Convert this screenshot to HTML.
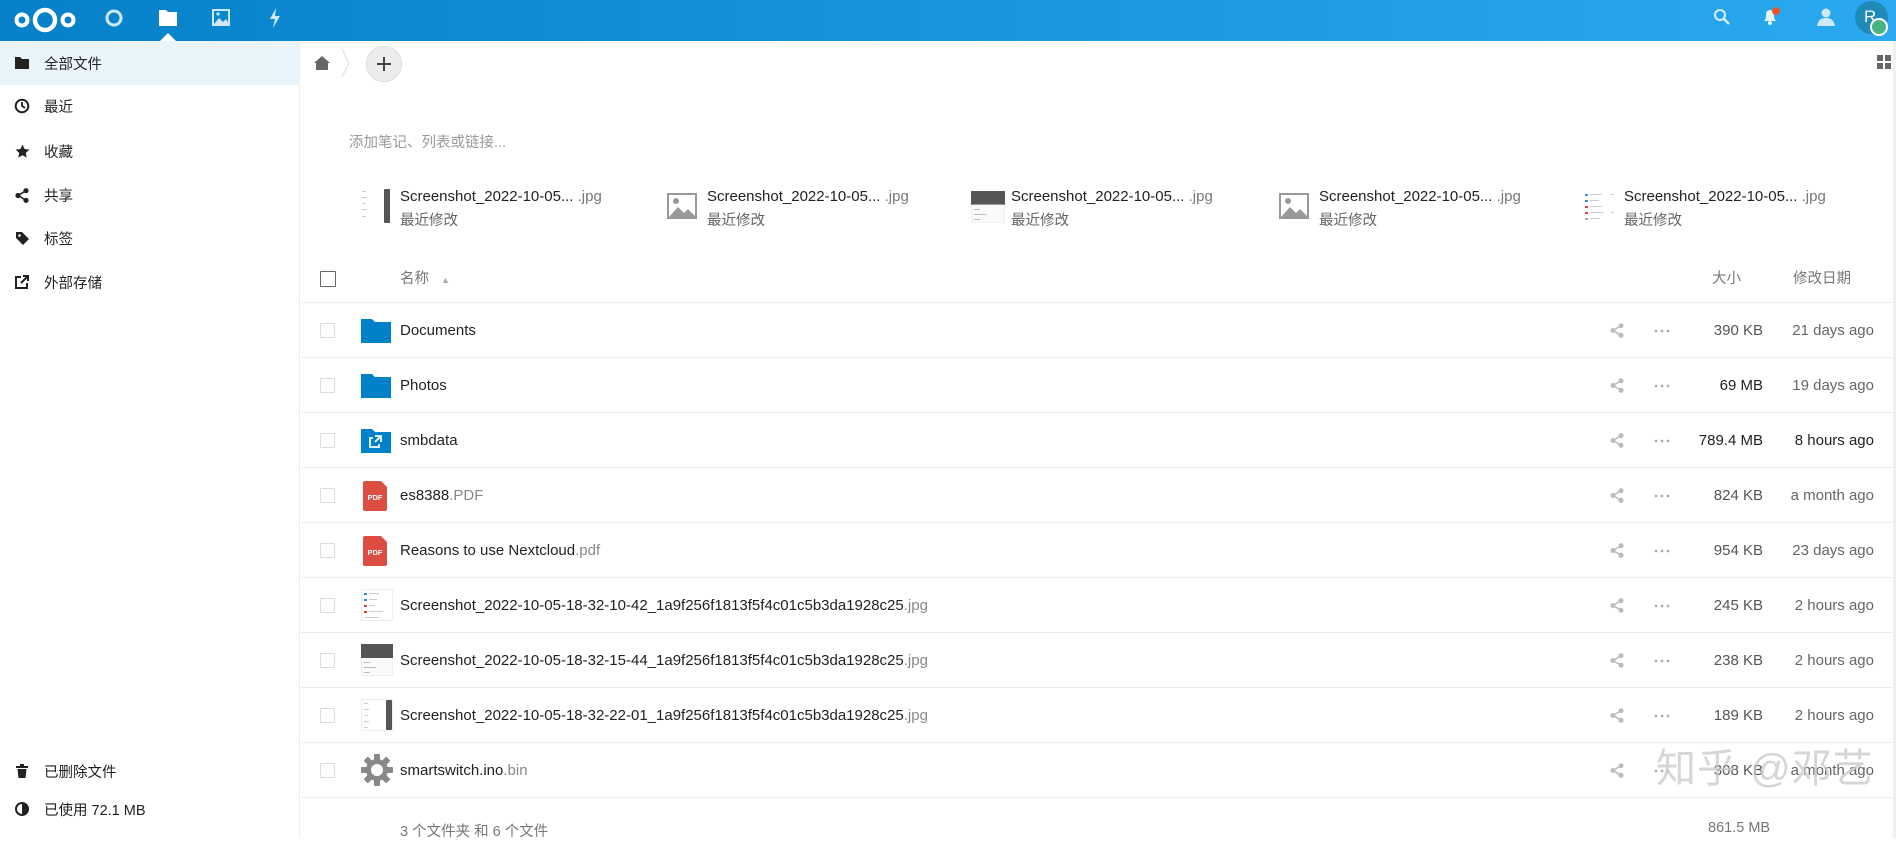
<!DOCTYPE html>
<html><head><meta charset="utf-8"><style>
*{box-sizing:border-box;margin:0;padding:0}
body{width:1896px;height:838px;overflow:hidden;background:#fff;font-family:"Liberation Sans","Noto Sans CJK SC",sans-serif;color:#222;font-size:15px;position:relative}
.hdr{position:absolute;left:0;top:0;width:1896px;height:41px;background:linear-gradient(90deg,#0681c9,#2aa9f0)}
.abs{position:absolute}
.side{position:absolute;left:0;top:41px;width:300px;height:797px;border-right:1px solid #eee}
.nav{position:absolute;left:0;width:299px;height:44px;display:flex;align-items:center;font-size:14.5px;color:#222}
.nav .ic{width:44px;display:flex;justify-content:center;padding-left:0}
.row{position:absolute;left:301px;width:1595px;height:55px;border-bottom:1px solid #ededed}
.cb{position:absolute;left:19px;top:20px;width:15px;height:15px;border:1px solid #ddd;border-radius:1px}
.nm{position:absolute;left:99px;top:0;line-height:55px;color:#222}
.nm i{font-style:normal;color:#888}
.sh{position:absolute;left:1309px;top:20px}
.dt{position:absolute;left:1352px;top:26px;width:18px;height:4px;background:radial-gradient(circle,#aaa 1.2px,transparent 1.5px) 0 0/6px 4px}
.sz{position:absolute;right:133px;line-height:55px;color:#555;text-align:right}
.dd{position:absolute;right:22px;line-height:55px;color:#666;text-align:right}
.fi{position:absolute;left:60px;top:15px}
.rec{position:absolute;top:185px;height:40px}
.rec .t{position:absolute;left:40px;top:3px;white-space:nowrap;font-size:15px;color:#222}
.rec .t i{font-style:normal;color:#777}
.rec .s{position:absolute;left:40px;top:24px;white-space:nowrap;font-size:14.5px;color:#666}
</style></head><body>
<div class="hdr">
<svg class="abs" style="left:13px;top:5px" width="64" height="30" viewBox="0 0 64 30"><circle cx="32" cy="15" r="10" fill="none" stroke="#fff" stroke-width="4.5"/><circle cx="9" cy="15" r="5.5" fill="none" stroke="#fff" stroke-width="4"/><circle cx="55" cy="15" r="5.5" fill="none" stroke="#fff" stroke-width="4"/></svg>
<svg class="abs" style="left:104px;top:8px" width="20" height="20"><circle cx="10" cy="10" r="7" fill="none" stroke="#cfe8f7" stroke-width="3"/></svg>
<svg class="abs" style="left:158px;top:9px" width="20" height="18"><path d="M1 1h7l2 2h9v14H1z" fill="#fff"/></svg>
<svg class="abs" style="left:160px;top:33px" width="16" height="8"><path d="M0 8L8 0l8 8z" fill="#fff"/></svg>
<svg class="abs" style="left:212px;top:9px" width="18" height="17"><rect x="1" y="1" width="16" height="15" fill="none" stroke="#cfe8f7" stroke-width="2"/><path d="M2 15l5-6 4 4 3-3 3 5z" fill="#cfe8f7"/><circle cx="6" cy="5" r="1.6" fill="#cfe8f7"/></svg>
<svg class="abs" style="left:268px;top:8px" width="14" height="20"><path d="M8 0L2 11h5l-2 9 7-12H7z" fill="#cfe8f7"/></svg>
<svg class="abs" style="left:1713px;top:8px" width="18" height="18"><circle cx="7" cy="7" r="5" fill="none" stroke="#d6eefc" stroke-width="2"/><path d="M11 11l5 5" stroke="#d6eefc" stroke-width="2.5"/></svg>
<svg class="abs" style="left:1760px;top:6px" width="22" height="20"><path d="M4 15c2-2 2-4 2-7a4 4 0 0 1 8 0c0 3 0 5 2 7z" fill="#e6f5fd"/><circle cx="10" cy="17" r="2" fill="#e6f5fd"/><circle cx="16" cy="5" r="4" fill="#e9542f"/></svg>
<svg class="abs" style="left:1815px;top:7px" width="20" height="20"><circle cx="11" cy="6" r="4.5" fill="#cfe8f7"/><path d="M2 19c1-6 4-8 9-8s8 2 9 8z" fill="#cfe8f7"/></svg>
<div class="abs" style="left:1855px;top:1px;width:33px;height:33px;border-radius:50%;background:#1f8ab7;color:#fff;font-size:17px;line-height:31px;padding-left:9px">R</div>
<div class="abs" style="left:1870px;top:18px;width:18px;height:18px;border-radius:50%;background:#49b382;border:2px solid #fff"></div>
</div>

<div class="side">
<div class="nav" style="top:0;background:#eaf4fb"><div class="ic"><svg width="14" height="12"><path d="M0 0h5l2 2h7v10H0z" fill="#222"/></svg></div><span>全部文件</span></div>
<div class="nav" style="top:43px"><div class="ic"><svg width="16" height="16"><circle cx="8" cy="8" r="6.3" fill="none" stroke="#222" stroke-width="2"/><path d="M8 4v4l3 2" stroke="#222" stroke-width="1.8" fill="none"/></svg></div><span>最近</span></div>
<div class="nav" style="top:88px"><div class="ic"><svg width="15" height="15" viewBox="0 0 24 24"><path d="M12 1l3.3 7 7.7.9-5.7 5.3 1.5 7.6L12 18l-6.8 3.8 1.5-7.6L1 8.9 8.7 8z" fill="#222"/></svg></div><span>收藏</span></div>
<div class="nav" style="top:132px"><div class="ic"><svg width="14" height="15"><circle cx="3" cy="7.5" r="2.6" fill="#222"/><circle cx="11" cy="2.7" r="2.6" fill="#222"/><circle cx="11" cy="12.3" r="2.6" fill="#222"/><path d="M3 7.5L11 2.7M3 7.5l8 4.8" stroke="#222" stroke-width="1.6"/></svg></div><span>共享</span></div>
<div class="nav" style="top:175px"><div class="ic"><svg width="15" height="15"><path d="M1 1h6l7 7-6 6-7-7z" fill="#222"/><circle cx="4.5" cy="4.5" r="1.3" fill="#fff"/></svg></div><span>标签</span></div>
<div class="nav" style="top:219px"><div class="ic"><svg width="14" height="14"><path d="M6 2H1v11h11V8" fill="none" stroke="#222" stroke-width="2"/><path d="M8 1h5v5M13 1L6 8" stroke="#222" stroke-width="2" fill="none"/></svg></div><span>外部存储</span></div>
<div class="nav" style="top:708px"><div class="ic"><svg width="12" height="14"><path d="M0 2h12v2H0zM4 0h4v2H4zM1.5 5h9l-1 9h-7z" fill="#222"/></svg></div><span>已删除文件</span></div>
<div class="nav" style="top:746px"><div class="ic"><svg width="14" height="14"><circle cx="7" cy="7" r="6" fill="none" stroke="#222" stroke-width="2"/><path d="M7 1a6 6 0 0 1 0 12z" fill="#222"/></svg></div><span>已使用 72.1 MB</span></div>
</div>

<svg class="abs" style="left:314px;top:56px" width="16" height="14"><path d="M8 0l8 7h-2v7H2V7H0z" fill="#666"/></svg>
<svg class="abs" style="left:341px;top:48px" width="10" height="30"><path d="M1 1l7 14-7 14" stroke="#ddd" fill="none"/></svg>
<div class="abs" style="left:366px;top:46px;width:36px;height:36px;border-radius:50%;background:#ececec;border:1px solid #ddd"></div>
<div class="abs" style="left:377px;top:63px;width:14px;height:2px;background:#444"></div>
<div class="abs" style="left:383px;top:57px;width:2px;height:14px;background:#444"></div>
<svg class="abs" style="left:1877px;top:55px" width="14" height="14"><rect width="6" height="6" fill="#666"/><rect x="8" width="6" height="6" fill="#666"/><rect y="8" width="6" height="6" fill="#666"/><rect x="8" y="8" width="6" height="6" fill="#666"/></svg>

<div class="abs" style="left:349px;top:131px;color:#999;font-size:14.5px">添加笔记、列表或链接...</div>

<div class="rec" style="left:360px"><svg class="abs" style="left:0;top:4px" width="34" height="38"><g fill="#ccc"><rect x="2" y="2" width="4" height="1"/><rect x="2" y="8" width="5" height="1"/><rect x="2" y="14" width="4" height="1"/><rect x="2" y="20" width="5" height="1"/><rect x="2" y="27" width="4" height="1"/></g><rect x="24" y="0" width="6" height="34" rx="1" fill="#555"/></svg><div class="t">Screenshot_2022-10-05...<i> .jpg</i></div><div class="s">最近修改</div></div>
<div class="rec" style="left:667px"><svg class="abs" style="left:0;top:8px" width="30" height="26"><rect x="1" y="1" width="28" height="24" fill="none" stroke="#999" stroke-width="2"/><path d="M2 24l9-10 6 6 4-4 8 8z" fill="#999"/><circle cx="9" cy="8" r="3" fill="#999"/></svg><div class="t">Screenshot_2022-10-05...<i> .jpg</i></div><div class="s">最近修改</div></div>
<div class="rec" style="left:971px"><svg class="abs" style="left:0;top:6px" width="34" height="32"><rect width="34" height="14" fill="#555"/><rect x="1" y="14" width="32" height="18" fill="#fafafa" stroke="#eee"/><g fill="#bbb"><rect x="3" y="18" width="6" height="1"/><rect x="3" y="23" width="12" height="1"/><rect x="3" y="28" width="6" height="1"/></g></svg><div class="t">Screenshot_2022-10-05...<i> .jpg</i></div><div class="s">最近修改</div></div>
<div class="rec" style="left:1279px"><svg class="abs" style="left:0;top:8px" width="30" height="26"><rect x="1" y="1" width="28" height="24" fill="none" stroke="#999" stroke-width="2"/><path d="M2 24l9-10 6 6 4-4 8 8z" fill="#999"/><circle cx="9" cy="8" r="3" fill="#999"/></svg><div class="t">Screenshot_2022-10-05...<i> .jpg</i></div><div class="s">最近修改</div></div>
<div class="rec" style="left:1584px"><svg class="abs" style="left:0;top:6px" width="34" height="32"><g><rect x="1" y="3" width="3" height="2" fill="#3b8fd4"/><rect x="1" y="9" width="3" height="2" fill="#3b8fd4"/><rect x="1" y="15" width="3" height="2" fill="#d44"/><rect x="1" y="21" width="3" height="2" fill="#d44"/><rect x="1" y="27" width="3" height="2" fill="#aaa"/></g><g fill="#ccc"><rect x="6" y="3" width="12" height="1"/><rect x="6" y="9" width="9" height="1"/><rect x="6" y="15" width="12" height="1"/><rect x="6" y="21" width="14" height="1"/><rect x="6" y="27" width="10" height="1"/><rect x="27" y="3" width="3" height="1"/><rect x="27" y="21" width="3" height="1"/></g></svg><div class="t">Screenshot_2022-10-05...<i> .jpg</i></div><div class="s">最近修改</div></div>

<div class="row" style="top:247px;height:56px">
<div class="cb" style="top:24px;border-color:#666;width:16px;height:16px"></div>
<div class="nm" style="line-height:64px;color:#777;font-size:14.5px">名称 <span style="font-size:9px;color:#aaa;margin-left:8px">▲</span></div>
<div class="abs" style="left:1411px;line-height:64px;color:#777;font-size:14.5px">大小</div>
<div class="abs" style="left:1492px;line-height:64px;color:#777;font-size:14.5px">修改日期</div>
</div>

<div class="row" style="top:303px"><div class="cb"></div><svg class="fi" width="30" height="24" style="top:16px"><path d="M0 0h11l3 3h16v21H0z" fill="#0082c9"/></svg><div class="nm">Documents</div><svg class="sh" width="14" height="15"><circle cx="3" cy="7.5" r="2.5" fill="#bbb"/><circle cx="11" cy="2.7" r="2.5" fill="#bbb"/><circle cx="11" cy="12.3" r="2.5" fill="#bbb"/><path d="M3 7.5L11 2.7M3 7.5l8 4.8" stroke="#bbb" stroke-width="1.5"/></svg><div class="dt"></div><div class="sz">390 KB</div><div class="dd">21 days ago</div></div>
<div class="row" style="top:358px"><div class="cb"></div><svg class="fi" width="30" height="24" style="top:16px"><path d="M0 0h11l3 3h16v21H0z" fill="#0082c9"/></svg><div class="nm">Photos</div><svg class="sh" width="14" height="15"><circle cx="3" cy="7.5" r="2.5" fill="#bbb"/><circle cx="11" cy="2.7" r="2.5" fill="#bbb"/><circle cx="11" cy="12.3" r="2.5" fill="#bbb"/><path d="M3 7.5L11 2.7M3 7.5l8 4.8" stroke="#bbb" stroke-width="1.5"/></svg><div class="dt"></div><div class="sz" style="color:#222">69 MB</div><div class="dd">19 days ago</div></div>
<div class="row" style="top:413px"><div class="cb"></div><svg class="fi" width="30" height="24" style="top:16px"><path d="M0 0h11l3 3h16v21H0z" fill="#0082c9"/><path d="M12 9h-3v9h9v-3" stroke="#fff" stroke-width="1.8" fill="none"/><path d="M14 7h6v6M20 7l-6 6" stroke="#fff" stroke-width="1.8" fill="none"/></svg><div class="nm">smbdata</div><svg class="sh" width="14" height="15"><circle cx="3" cy="7.5" r="2.5" fill="#bbb"/><circle cx="11" cy="2.7" r="2.5" fill="#bbb"/><circle cx="11" cy="12.3" r="2.5" fill="#bbb"/><path d="M3 7.5L11 2.7M3 7.5l8 4.8" stroke="#bbb" stroke-width="1.5"/></svg><div class="dt"></div><div class="sz" style="color:#222">789.4 MB</div><div class="dd" style="color:#222">8 hours ago</div></div>
<div class="row" style="top:468px"><div class="cb"></div><svg class="fi" width="26" height="30" style="left:62px;top:13px"><path d="M0 2a2 2 0 0 1 2-2h16l6 6v22a2 2 0 0 1-2 2H2a2 2 0 0 1-2-2z" fill="#dc4e41"/><text x="12" y="19" font-size="7.5" fill="#fff" text-anchor="middle" font-family="Liberation Sans" font-weight="bold">PDF</text></svg><div class="nm">es8388<i>.PDF</i></div><svg class="sh" width="14" height="15"><circle cx="3" cy="7.5" r="2.5" fill="#bbb"/><circle cx="11" cy="2.7" r="2.5" fill="#bbb"/><circle cx="11" cy="12.3" r="2.5" fill="#bbb"/><path d="M3 7.5L11 2.7M3 7.5l8 4.8" stroke="#bbb" stroke-width="1.5"/></svg><div class="dt"></div><div class="sz">824 KB</div><div class="dd">a month ago</div></div>
<div class="row" style="top:523px"><div class="cb"></div><svg class="fi" width="26" height="30" style="left:62px;top:13px"><path d="M0 2a2 2 0 0 1 2-2h16l6 6v22a2 2 0 0 1-2 2H2a2 2 0 0 1-2-2z" fill="#dc4e41"/><text x="12" y="19" font-size="7.5" fill="#fff" text-anchor="middle" font-family="Liberation Sans" font-weight="bold">PDF</text></svg><div class="nm">Reasons to use Nextcloud<i>.pdf</i></div><svg class="sh" width="14" height="15"><circle cx="3" cy="7.5" r="2.5" fill="#bbb"/><circle cx="11" cy="2.7" r="2.5" fill="#bbb"/><circle cx="11" cy="12.3" r="2.5" fill="#bbb"/><path d="M3 7.5L11 2.7M3 7.5l8 4.8" stroke="#bbb" stroke-width="1.5"/></svg><div class="dt"></div><div class="sz">954 KB</div><div class="dd">23 days ago</div></div>
<div class="row" style="top:578px"><div class="cb"></div><svg class="fi" width="32" height="32" style="top:11px"><rect x=".5" y=".5" width="31" height="31" fill="#fff" stroke="#eee"/><rect x="3" y="4" width="3" height="2" fill="#3b8fd4"/><rect x="3" y="10" width="3" height="2" fill="#3b8fd4"/><rect x="3" y="16" width="3" height="2" fill="#d44"/><rect x="3" y="22" width="3" height="2" fill="#d44"/><g fill="#ccc"><rect x="8" y="4" width="10" height="1"/><rect x="8" y="10" width="8" height="1"/><rect x="8" y="16" width="6" height="1"/><rect x="8" y="22" width="14" height="1"/><rect x="4" y="28" width="14" height="1"/></g></svg><div class="nm">Screenshot_2022-10-05-18-32-10-42_1a9f256f1813f5f4c01c5b3da1928c25<i>.jpg</i></div><svg class="sh" width="14" height="15"><circle cx="3" cy="7.5" r="2.5" fill="#bbb"/><circle cx="11" cy="2.7" r="2.5" fill="#bbb"/><circle cx="11" cy="12.3" r="2.5" fill="#bbb"/><path d="M3 7.5L11 2.7M3 7.5l8 4.8" stroke="#bbb" stroke-width="1.5"/></svg><div class="dt"></div><div class="sz">245 KB</div><div class="dd">2 hours ago</div></div>
<div class="row" style="top:633px"><div class="cb"></div><svg class="fi" width="32" height="32" style="top:11px"><rect x=".5" y=".5" width="31" height="31" fill="#fafafa" stroke="#eee"/><rect width="32" height="14" fill="#555"/><g fill="#bbb"><rect x="3" y="18" width="6" height="1"/><rect x="3" y="23" width="12" height="1"/><rect x="3" y="28" width="6" height="1"/></g></svg><div class="nm">Screenshot_2022-10-05-18-32-15-44_1a9f256f1813f5f4c01c5b3da1928c25<i>.jpg</i></div><svg class="sh" width="14" height="15"><circle cx="3" cy="7.5" r="2.5" fill="#bbb"/><circle cx="11" cy="2.7" r="2.5" fill="#bbb"/><circle cx="11" cy="12.3" r="2.5" fill="#bbb"/><path d="M3 7.5L11 2.7M3 7.5l8 4.8" stroke="#bbb" stroke-width="1.5"/></svg><div class="dt"></div><div class="sz">238 KB</div><div class="dd">2 hours ago</div></div>
<div class="row" style="top:688px"><div class="cb"></div><svg class="fi" width="32" height="32" style="top:11px"><rect x=".5" y=".5" width="31" height="31" fill="#fff" stroke="#eee"/><g fill="#ccc"><rect x="3" y="4" width="4" height="1"/><rect x="3" y="10" width="5" height="1"/><rect x="3" y="16" width="4" height="1"/><rect x="3" y="22" width="5" height="1"/><rect x="3" y="28" width="4" height="1"/></g><rect x="25" y="1" width="6" height="30" rx="1" fill="#555"/></svg><div class="nm">Screenshot_2022-10-05-18-32-22-01_1a9f256f1813f5f4c01c5b3da1928c25<i>.jpg</i></div><svg class="sh" width="14" height="15"><circle cx="3" cy="7.5" r="2.5" fill="#bbb"/><circle cx="11" cy="2.7" r="2.5" fill="#bbb"/><circle cx="11" cy="12.3" r="2.5" fill="#bbb"/><path d="M3 7.5L11 2.7M3 7.5l8 4.8" stroke="#bbb" stroke-width="1.5"/></svg><div class="dt"></div><div class="sz">189 KB</div><div class="dd">2 hours ago</div></div>
<div class="row" style="top:743px"><div class="cb"></div><svg class="fi" width="32" height="32" style="top:11px" viewBox="0 0 32 32"><g fill="#888"><circle cx="16" cy="16" r="11"/><rect x="13" y="0" width="6" height="32" rx="1"/><rect x="0" y="13" width="32" height="6" rx="1"/><rect x="13" y="0" width="6" height="32" rx="1" transform="rotate(45 16 16)"/><rect x="13" y="0" width="6" height="32" rx="1" transform="rotate(-45 16 16)"/></g><circle cx="16" cy="16" r="6" fill="#fff"/></svg><div class="nm">smartswitch.ino<i>.bin</i></div><svg class="sh" width="14" height="15"><circle cx="3" cy="7.5" r="2.5" fill="#bbb"/><circle cx="11" cy="2.7" r="2.5" fill="#bbb"/><circle cx="11" cy="12.3" r="2.5" fill="#bbb"/><path d="M3 7.5L11 2.7M3 7.5l8 4.8" stroke="#bbb" stroke-width="1.5"/></svg><div class="dt"></div><div class="sz">308 KB</div><div class="dd">a month ago</div></div>

<div class="abs" style="left:400px;top:820px;color:#777;font-size:14.5px">3 个文件夹 和 6 个文件</div>
<div class="abs" style="left:1708px;top:820px;color:#777;font-size:14.5px">861.5 MB</div>
<div class="abs" style="left:1656px;top:736px;font-size:40px;color:rgba(200,200,200,.75);letter-spacing:1px;white-space:nowrap">知乎 @邓艺</div>
<div class="abs" style="left:1893px;top:41px;width:3px;height:797px;background:#f0f0f0"></div>
</body></html>
